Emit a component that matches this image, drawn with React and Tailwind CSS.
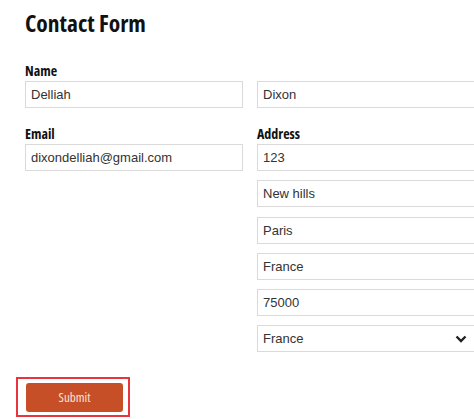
import { useState } from 'react';

const labelCls =
  "block font-['Open_Sans',sans-serif] font-bold font-stretch-condensed text-[14px] leading-[17px] text-[#111] mb-[2px]";
const inputCls =
  "block w-full h-[27px] border border-[#dadada] bg-white px-[5px] font-['Liberation_Sans',Arial,sans-serif] text-[13px] text-[#333] outline-none";

function Field({ value, onChange }) {
  return <input type="text" value={value} onChange={(e) => onChange(e.target.value)} className={inputCls} />;
}

export default function App() {
  const [form, setForm] = useState({
    first: 'Delliah',
    last: 'Dixon',
    email: 'dixondelliah@gmail.com',
    street: '123',
    street2: 'New hills',
    city: 'Paris',
    region: 'France',
    zip: '75000',
    country: 'France',
  });
  const set = (k) => (v) => setForm((f) => ({ ...f, [k]: v }));

  return (
    <div className="w-[474px] h-[419px] overflow-hidden bg-white">
      <div className="w-[520px] pl-[25px] pt-[8.6px]">
        <h1 className="font-['Open_Sans',sans-serif] font-bold font-stretch-condensed text-[23.5px] leading-[28px] text-[#111] mb-[25.4px]">
          Contact Form
        </h1>

        <div className="grid grid-cols-[218px_218px] gap-x-[14px] items-end">
          <div>
            <label className={labelCls}>Name</label>
            <Field value={form.first} onChange={set('first')} />
          </div>
          <Field value={form.last} onChange={set('last')} />
        </div>

        <div className="grid grid-cols-[218px_218px] gap-x-[14px] mt-[17px] items-start">
          <div>
            <label className={labelCls}>Email</label>
            <Field value={form.email} onChange={set('email')} />
          </div>
          <div>
            <label className={labelCls}>Address</label>
            <div className="flex flex-col gap-[9.3px]">
              <Field value={form.street} onChange={set('street')} />
              <Field value={form.street2} onChange={set('street2')} />
              <Field value={form.city} onChange={set('city')} />
              <Field value={form.region} onChange={set('region')} />
              <Field value={form.zip} onChange={set('zip')} />
              <div className="relative">
                <select
                  value={form.country}
                  onChange={(e) => set('country')(e.target.value)}
                  className={`${inputCls} appearance-none rounded-none`}
                >
                  <option>France</option>
                  <option>Germany</option>
                  <option>Spain</option>
                </select>
                <svg
                  className="absolute left-[198px] top-[10px] pointer-events-none"
                  width="12"
                  height="8"
                  viewBox="0 0 12 8"
                >
                  <polyline points="1.5,1.5 6,6 10.5,1.5" fill="none" stroke="#222" strokeWidth="2.4" />
                </svg>
              </div>
            </div>
          </div>
        </div>

        <div className="ml-[-9px] mt-[25px] w-[114px] h-[40px] border-2 border-[#e8343c]">
          <button
            type="button"
            className="ml-[8px] mt-[4px] w-[97px] h-[29px] rounded-[3px] bg-[#c64f27] font-['Open_Sans',sans-serif] font-stretch-condensed text-[13px] text-[#f8e4da]"
          >
            Submit
          </button>
        </div>
      </div>
    </div>
  );
}
